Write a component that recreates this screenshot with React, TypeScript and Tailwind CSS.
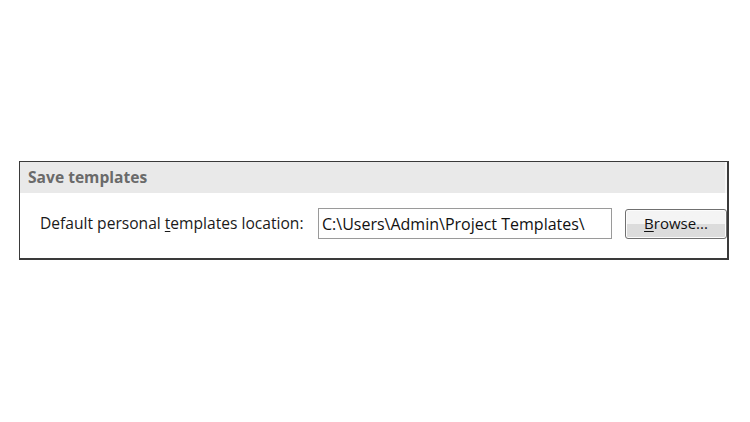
export default function App() {
  return (
    <div className="w-[750px] h-[422px] bg-white pt-[161px] pl-[19px] font-['Open_Sans','Noto_Sans',sans-serif]">
      <div className="w-[710px] h-[99px] border-2 border-[#3a3a3a] border-t border-l bg-white flex flex-col">
        <div className="h-[31px] bg-[#e9e9e9] border-r-2 border-[#f6f6f6] flex items-center pl-[8px]">
          <span className="text-[15.6px] font-bold text-[#6a6a6a] leading-none">Save templates</span>
        </div>
        <div className="flex items-center pt-[15px] pl-[20px]">
          <span className="text-[15.6px] text-[#1a1a1a] w-[278px] whitespace-nowrap">
            Default personal <span className="underline underline-offset-2">t</span>emplates location:
          </span>
          <div className="w-[294px] h-[31px] border border-[#9a9a9a] bg-white flex items-center pl-[3px]">
            <span className="text-[16px] text-[#111] whitespace-nowrap">C:\Users\Admin\Project Templates\</span>
          </div>
          <button className="ml-[13px] w-[102px] h-[30px] rounded-[3px] border border-[#707070] bg-gradient-to-b from-[#f4f4f4] from-50% to-[#dcdcdc] to-50% shadow-[inset_0_0_0_1px_#fcfcfc] flex items-center justify-center">
            <span className="text-[15px] text-[#111]">
              <span className="underline underline-offset-2">B</span>rowse...
            </span>
          </button>
        </div>
      </div>
    </div>
  );
}
